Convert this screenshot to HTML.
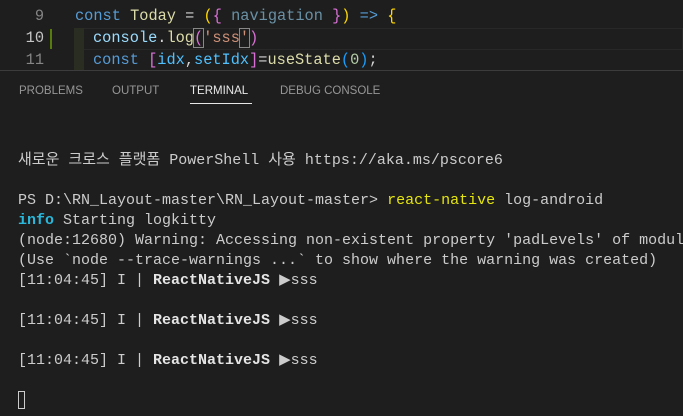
<!DOCTYPE html><html><head><style>
body{margin:0;width:683px;height:416px;background:#1e1e1e;overflow:hidden;font-family:"Liberation Mono",monospace;position:relative}
.ed{position:absolute;left:0;top:0;width:683px;height:70px;background:#1e1e1e;border-bottom:1px solid #3c3c3c;overflow:hidden}
.ln{position:absolute;left:0;width:44px;text-align:right;font-size:15.3px;color:#858585}
.cd{position:absolute;left:75px;font-size:15.3px;white-space:pre;color:#d4d4d4}
.tabs{position:absolute;top:85px;left:0;font-family:"Liberation Sans",sans-serif;font-size:11.5px;color:#969696}
.tabs span{position:absolute;white-space:nowrap}
.t{position:absolute;left:18px;font-size:15px;color:#cccccc;white-space:pre;line-height:20px}
.t b{color:#e5e5e5}
</style></head><body>
<div class="ed">
<div style="position:absolute;left:74px;top:28px;width:609px;height:22px;border:1px solid #282828;box-sizing:border-box"></div>
<div style="position:absolute;left:50px;top:29px;width:2px;height:20px;background:#587c0c"></div>
<div style="position:absolute;left:74px;top:28px;width:10px;height:42px;background:#2a2d22"></div>
<div class="ln" style="top:7px">9</div><div class="ln" style="top:29px;color:#c6c6c6">10</div><div class="ln" style="top:51px">11</div>
<div class="cd" style="top:7px"><span style="color:#569cd6">const</span> <span style="color:#dcdcaa">Today</span> = <span style="color:#ffd700">(</span><span style="color:#da70d6">{</span> <span style="color:#9cdcfe;opacity:.6">navigation</span> <span style="color:#da70d6">}</span><span style="color:#ffd700">)</span> <span style="color:#569cd6">=&gt;</span> <span style="color:#ffd700">{</span></div>
<div class="cd" style="top:29px;left:93px"><span style="color:#9cdcfe">console</span>.<span style="color:#dcdcaa">log</span><span style="color:#da70d6;outline:1px solid #888">(</span><span style="color:#ce9178">'sss</span><span style="color:#ce9178;outline:1px solid #888">'</span><span style="color:#da70d6">)</span></div>
<div class="cd" style="top:51px;left:93px"><span style="color:#569cd6">const</span> <span style="color:#da70d6">[</span><span style="color:#4fc1ff">idx</span>,<span style="color:#4fc1ff">setIdx</span><span style="color:#da70d6">]</span>=<span style="color:#dcdcaa">useState</span><span style="color:#179fff">(</span><span style="color:#b5cea8">0</span><span style="color:#179fff">)</span>;</div>
</div>
<div class="tabs"><span style="left:19px">PROBLEMS</span><span style="left:112px">OUTPUT</span><span style="left:190px;color:#e7e7e7">TERMINAL</span><span style="left:280px">DEBUG CONSOLE</span></div>
<div style="position:absolute;left:190px;top:103px;width:62px;height:1px;background:#e7e7e7"></div>
<div class="t" style="top:151px;font-family:'Liberation Mono','Noto Sans CJK KR',monospace">새로운 크로스 플랫폼 PowerShell 사용 https://aka.ms/pscore6</div>
<div class="t" style="top:191px">PS D:\RN_Layout-master\RN_Layout-master&gt; <span style="color:#e5e510">react-native</span> log-android
<span style="color:#29b8db;font-weight:bold">info</span> Starting logkitty
(node:12680) Warning: Accessing non-existent property 'padLevels' of module
(Use `node --trace-warnings ...` to show where the warning was created)
[11:04:45] I | <b>ReactNativeJS</b> ▶sss

[11:04:45] I | <b>ReactNativeJS</b> ▶sss

[11:04:45] I | <b>ReactNativeJS</b> ▶sss</div>
<div style="position:absolute;left:18px;top:391px;width:7px;height:18px;border:1px solid #cccccc;box-sizing:border-box"></div>
</body></html>
